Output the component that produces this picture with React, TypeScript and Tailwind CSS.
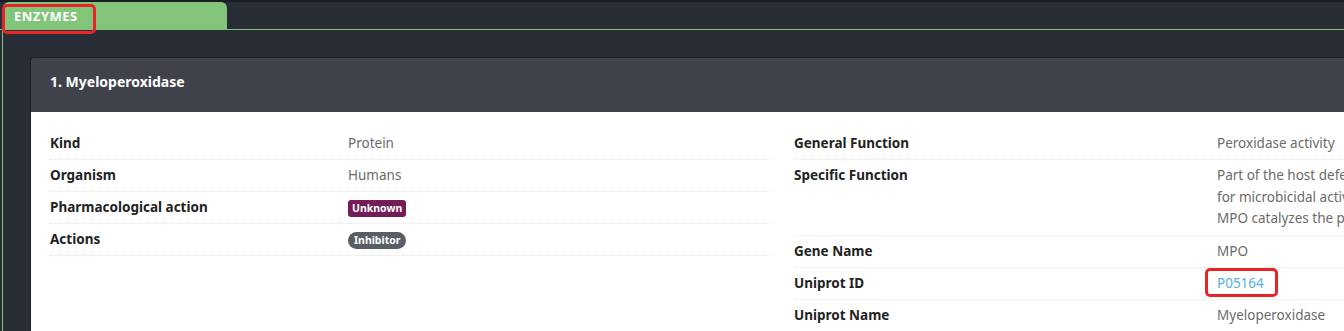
const font = { fontFamily: '"Noto Sans", "Open Sans", sans-serif' }

type Row = { label: string; value: React.ReactNode }

function Badge({ children, pill, color }: { children: React.ReactNode; pill?: boolean; color: string }) {
  return (
    <span
      className={`inline-block text-[10.5px] font-bold leading-[17px] text-white ${pill ? 'rounded-full px-[6px]' : 'rounded-[3px] px-[4px]'} ${color}`}
    >
      {children}
    </span>
  )
}

function Rows({ rows, labelW }: { rows: Row[]; labelW: string }) {
  return (
    <dl>
      {rows.map((r) => (
        <div key={r.label} className="flex border-b border-dotted border-[#e4e4e4] py-[5px]">
          <dt className={`${labelW} shrink-0 text-[13.5px] font-bold leading-[21px] text-[#222]`}>{r.label}</dt>
          <dd className="text-[13.5px] leading-[21px] text-[#6b6b6b]">{r.value}</dd>
        </div>
      ))}
    </dl>
  )
}

export default function App() {
  const left: Row[] = [
    { label: 'Kind', value: 'Protein' },
    { label: 'Organism', value: 'Humans' },
    { label: 'Pharmacological action', value: <Badge color="bg-[#731c57]">Unknown</Badge> },
    { label: 'Actions', value: <Badge pill color="bg-[#575e66]">Inhibitor</Badge> },
  ]
  const right: Row[] = [
    { label: 'General Function', value: <span className="whitespace-nowrap">Peroxidase activity</span> },
    {
      label: 'Specific Function',
      value: (
        <span className="block whitespace-nowrap leading-[21.7px]">
          <span className="block">Part of the host defense system of polymorphonuclear leukocytes. It is responsible</span>
          <span className="block">for microbicidal activity against a wide range of organisms. In the stimulated PMN,</span>
          <span className="block">MPO catalyzes the production of hypohalous acids, primarily hypochlorous acid</span>
        </span>
      ),
    },
    { label: 'Gene Name', value: 'MPO' },
    {
      label: 'Uniprot ID',
      value: (
        <span className="relative">
          <a className="text-[#55aee6]">P05164</a>
          <span className="absolute -left-[12px] -right-[14px] -top-[6px] -bottom-[5px] rounded-[5px] border-[3px] border-[#e8242a]" />
        </span>
      ),
    },
    { label: 'Uniprot Name', value: 'Myeloperoxidase' },
  ]

  return (
    <div className="h-[331px] w-[1344px] overflow-hidden border-t-2 border-[#1a1e24] bg-[#292d35]" style={font}>
      <div className="flex border-b border-[#7fc477] pl-[3px]">
        <div className="relative h-[27px] w-[224px] rounded-t-[6px] bg-[#82c57a] pl-[11px] text-[13px] font-bold leading-[28px] tracking-[0.5px] text-white">
          ENZYMES
          <span className="absolute -left-[1px] top-[2px] h-[30px] w-[94px] rounded-[5px] border-[3px] border-[#e8242a]" />
        </div>
      </div>
      <div className="ml-[2px] h-full border-l border-[#7fc477] pl-[27px] pt-[27px]">
        <div className="w-[1400px] overflow-hidden rounded-t-[4px] border-t border-l border-[#1c1f25]">
          <div className="h-[54px] bg-[#3f424a] px-[19px] pt-[13px] text-[14px] font-bold leading-[22px] text-white">
            1. Myeloperoxidase
          </div>
          <div className="flex h-[300px] gap-[24px] bg-white px-[19px] pt-[16px]">
            <div className="w-[720px] shrink-0">
              <Rows rows={left} labelW="w-[298px]" />
            </div>
            <div className="flex-1">
              <Rows rows={right} labelW="w-[423px]" />
            </div>
          </div>
        </div>
      </div>
    </div>
  )
}
